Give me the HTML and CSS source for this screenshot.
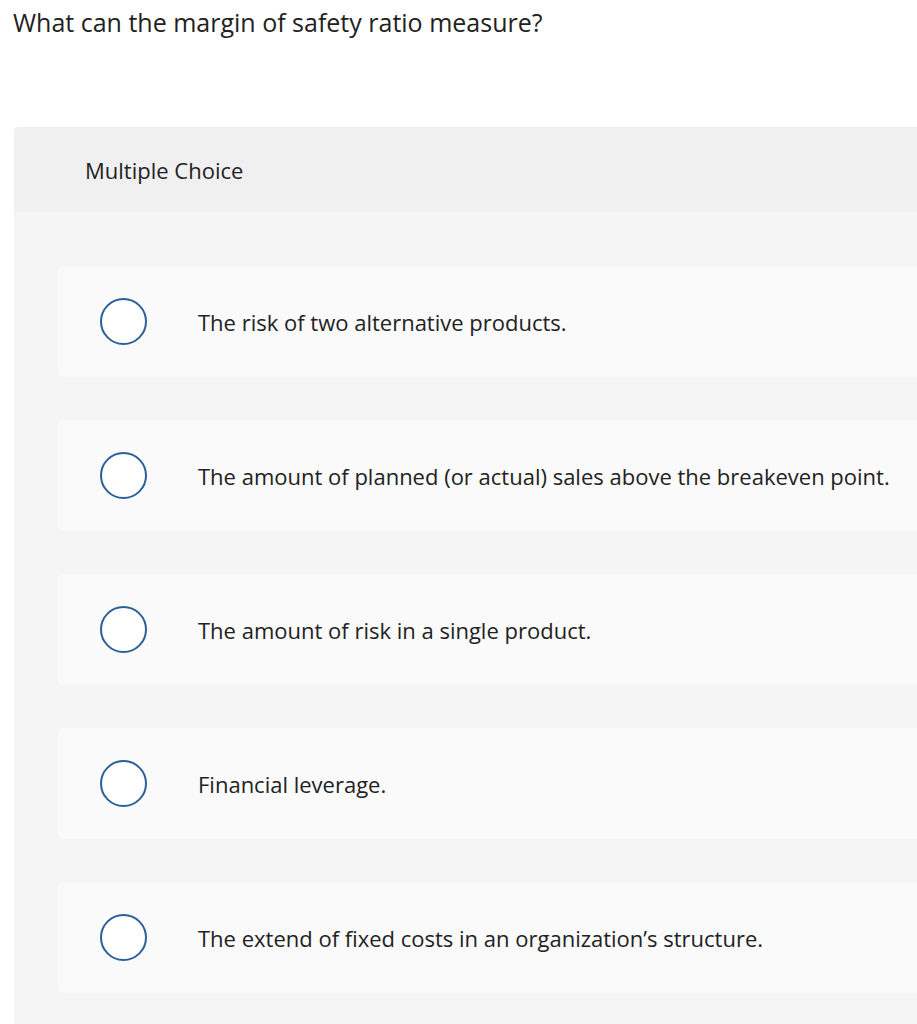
FILE: index.html
```html
<!DOCTYPE html>
<html>
<head>
<meta charset="utf-8">
<link rel="stylesheet" href="styles.css">
</head>
<body>
<div class="question">What can the margin of safety ratio measure?</div>
<div class="panel">
  <div class="panel-header">Multiple Choice</div>
  <div class="panel-body">
    <div class="option"><span class="radio"></span><span class="label">The risk of two alternative products.</span></div>
    <div class="option"><span class="radio"></span><span class="label">The amount of planned (or actual) sales above the breakeven point.</span></div>
    <div class="option"><span class="radio"></span><span class="label">The amount of risk in a single product.</span></div>
    <div class="option"><span class="radio"></span><span class="label">Financial leverage.</span></div>
    <div class="option"><span class="radio"></span><span class="label">The extend of fixed costs in an organization’s structure.</span></div>
  </div>
</div>
</body>
</html>
```
FILE: styles.css
```css
html, body {
  margin: 0;
  padding: 0;
  background: #ffffff;
}
body {
  font-family: "Open Sans", Lato, sans-serif;
  color: #222222;
  width: 917px;
  overflow: hidden;
}
.question {
  font-size: 25px;
  line-height: 44px;
  padding-left: 13px;
  height: 44px;
  white-space: nowrap;
}
.panel {
  margin-top: 83px;
  margin-left: 14px;
  background: #f5f5f5;
  border-top-left-radius: 4px;
  overflow: hidden;
}
.panel-header {
  background: #f0f0f0;
  height: 85px;
  display: flex;
  align-items: center;
  padding-left: 71px;
  font-size: 22px;
}
.panel-body {
  padding: 54px 0 40px 44px;
  display: flex;
  flex-direction: column;
  gap: 43px;
}
.option {
  background: #fafafa;
  height: 111px;
  border-radius: 5px 0 0 5px;
  display: flex;
  align-items: center;
  padding-left: 42px;
}
.radio {
  width: 43px;
  height: 43px;
  border: 2px solid #2b5f98;
  border-radius: 50%;
  background: #ffffff;
  flex: none;
}
.label {
  margin-left: 51px;
  font-size: 22px;
  white-space: nowrap;
}
```
